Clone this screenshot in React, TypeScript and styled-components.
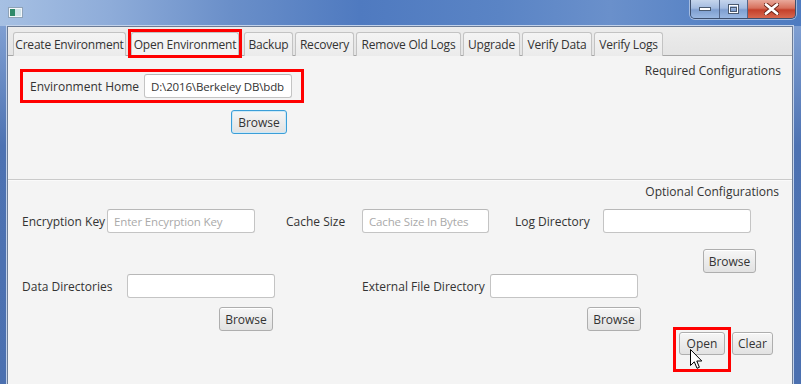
import styled, { createGlobalStyle } from "styled-components";

const GlobalStyle = createGlobalStyle`
  html, body {
    margin: 0;
    padding: 0;
  }
  body {
    width: 801px;
    height: 384px;
    overflow: hidden;
    font-family: "Open Sans", "Noto Sans", sans-serif;
    font-size: 12px;
    color: #333;
  }
`;

const tabs = [
  { title: "Create Environment", width: 113 },
  { title: "Open Environment", width: 108, active: true },
  { title: "Backup", width: 49 },
  { title: "Recovery", width: 59 },
  { title: "Remove Old Logs", width: 105 },
  { title: "Upgrade", width: 57 },
  { title: "Verify Data", width: 70 },
  { title: "Verify Logs", width: 69 },
];

export default function App() {
  return (
    <>
      <GlobalStyle />
      <Window>
        <TitleBar>
          <AppIcon width="15" height="11" viewBox="0 0 15 11">
            <rect x="0.5" y="0.5" width="14" height="10" fill="#f4f7fa" stroke="#8fa3b8" />
            <rect x="2" y="2" width="5" height="7" fill="#2f8a6a" />
            <rect x="7" y="2" width="6" height="7" fill="#cfe3e8" />
          </AppIcon>
          <Controls>
            <CtrlButton $w={28}>
              <svg width="12" height="6" viewBox="0 0 12 6">
                <rect x="0.5" y="1.5" width="11" height="3" fill="#fff" stroke="#4a5a70" />
              </svg>
            </CtrlButton>
            <CtrlButton $w={27}>
              <svg width="11" height="10" viewBox="0 0 11 10">
                <rect x="0.5" y="0.5" width="10" height="9" fill="none" stroke="#4a5a70" />
                <rect x="1.5" y="1.5" width="8" height="7" fill="none" stroke="#fff" />
                <rect x="2.5" y="3.5" width="6" height="4" fill="none" stroke="#4a5a70" />
              </svg>
            </CtrlButton>
            <CloseButton>
              <svg width="15" height="12" viewBox="0 0 15 12">
                <path d="M2 1.5 L13 10.5 M13 1.5 L2 10.5" stroke="#6e2619" strokeWidth="4.6" strokeLinecap="round" />
                <path d="M2 1.5 L13 10.5 M13 1.5 L2 10.5" stroke="#fff" strokeWidth="2.8" strokeLinecap="round" />
              </svg>
            </CloseButton>
          </Controls>
        </TitleBar>
        <Body>
          <Client>
            <TabHeader>
              {tabs.map((t) =>
                t.active ? (
                  <ActiveMark key={t.title}>
                    <Tab $w={t.width} $active>
                      {t.title}
                    </Tab>
                  </ActiveMark>
                ) : (
                  <Tab key={t.title} $w={t.width}>
                    {t.title}
                  </Tab>
                )
              )}
            </TabHeader>

            <RequiredSection>
              <HomeMark>
                <Label $w={114}>Environment Home</Label>
                <Field $w={148} defaultValue={"D:\\2016\\Berkeley DB\\bdb"} readOnly />
              </HomeMark>
              <SectionTitle>Required Configurations</SectionTitle>
              <ButtonRow $left={211}>
                <Button $w={56} $focused>Browse</Button>
              </ButtonRow>
            </RequiredSection>

            <OptionalSection>
              <SectionHeading>Optional Configurations</SectionHeading>
              <FieldRow $top={9}>
                <Label $w={85}>Encryption Key</Label>
                <Field $w={148} placeholder="Enter Encyrption Key" />
                <Label $w={76} $gap={31}>Cache Size</Label>
                <Field $w={127} placeholder="Cache Size In Bytes" />
                <Label $w={88} $gap={26}>Log Directory</Label>
                <Field $w={148} />
              </FieldRow>
              <ButtonRow $left={681} $top={16}>
                <Button $w={53}>Browse</Button>
              </ButtonRow>
              <FieldRow $top={1}>
                <Label $w={105}>Data Directories</Label>
                <Field $w={148} />
                <Label $w={128} $gap={87}>External File Directory</Label>
                <Field $w={148} />
              </FieldRow>
              <ButtonRow $left={197} $top={9}>
                <Button $w={54}>Browse</Button>
                <Button $w={54} $gap={314}>Browse</Button>
              </ButtonRow>
              <ButtonRow $left={657} $top={1}>
                <MarkWrap>
                  <Button $w={46} $h={23}>Open</Button>
                  <OpenMark />
                  <Cursor width="13" height="21" viewBox="0 0 13 21">
                    <path
                      d="M0.5 0.5 L0.5 16.5 L4.3 12.8 L7 19.3 L9.4 18.3 L6.8 12 L11.8 12 Z"
                      fill="#fff"
                      stroke="#000"
                      strokeLinejoin="round"
                    />
                  </Cursor>
                </MarkWrap>
                <Button $w={41} $h={23} $gap={7}>Clear</Button>
              </ButtonRow>
            </OptionalSection>
          </Client>
        </Body>
      </Window>
    </>
  );
}

const Window = styled.div`
  width: 801px;
  height: 384px;
  display: flex;
  flex-direction: column;
  background: linear-gradient(
    to right,
    #a6c0e3 0px,
    #8eacd9 110px,
    #6a8fc9 230px,
    #4f7ac0 360px,
    #5a84c5 500px,
    #6a90cb 610px,
    #5581c4 720px,
    #4e7bc0 801px
  );
`;

const TitleBar = styled.div`
  height: 26px;
  display: flex;
  justify-content: space-between;
  align-items: flex-start;
  padding: 0 5px 0 8px;
`;

const AppIcon = styled.svg`
  margin-top: 7px;
`;

const Controls = styled.div`
  display: flex;
  height: 18px;
  border: 1px solid #3d4f6e;
  border-top: none;
  border-radius: 0 0 5px 5px;
  overflow: hidden;
  box-shadow: 0 0 0 1px rgba(255, 255, 255, 0.45);
`;

const CtrlButton = styled.div<{ $w: number }>`
  width: ${(p) => p.$w}px;
  display: flex;
  align-items: center;
  justify-content: center;
  border-right: 1px solid #53668a;
  background: linear-gradient(#c5d5ec, #a3bbe0 45%, #7f9fd0 55%, #9ab8e2);
`;

const CloseButton = styled.div`
  width: 47px;
  display: flex;
  align-items: center;
  justify-content: center;
  background: linear-gradient(#e9a99b, #d7705c 45%, #c4402b 55%, #d7684f);
`;

const Body = styled.div`
  flex: 1;
  display: flex;
  padding: 0 8px 0 7px;
  background: linear-gradient(#7f9fd2, #4d72b2 120px, #4b70b0);
`;

const Client = styled.div`
  flex: 1;
  display: flex;
  flex-direction: column;
  background: #f4f4f4;
  border: 1px solid #6c7c96;
  border-bottom: none;
  box-shadow: 0 0 0 1px #c2d2ea;
`;

const TabHeader = styled.div`
  height: 29px;
  display: flex;
  align-items: flex-end;
  gap: 2px;
  padding-left: 5px;
  background: linear-gradient(#ececec, #e4e4e4);
  box-shadow: inset 0 -1px 0 #a7a7a7;
`;

const Tab = styled.div<{ $w: number; $active?: boolean }>`
  width: ${(p) => p.$w}px;
  height: 24px;
  box-sizing: border-box;
  display: flex;
  align-items: center;
  justify-content: center;
  border: 1px solid #c3c3c3;
  border-bottom: none;
  border-radius: 3px 3px 0 0;
  background: ${(p) => (p.$active ? "#f4f4f4" : "linear-gradient(#f4f4f4, #ebebeb)")};
  white-space: nowrap;
  letter-spacing: -0.2px;
`;

const ActiveMark = styled.div`
  display: flex;
  align-items: flex-end;
  justify-content: center;
  height: 27px;
  width: 114px;
  box-sizing: border-box;
  border: 3px solid #f00;
  border-bottom: none;
  position: relative;
  z-index: 1;
  &::after {
    content: "";
    position: absolute;
    left: -3px;
    right: -3px;
    bottom: -2px;
    height: 3px;
    background: #f00;
  }
`;

const RequiredSection = styled.div`
  height: 124px;
  box-sizing: border-box;
  display: grid;
  grid-template-columns: auto 1fr;
  grid-template-rows: auto auto;
  align-content: start;
  padding: 13px 11px 0 12px;
  border-bottom: 1px solid #cacaca;
`;

const SectionTitle = styled.div`
  justify-self: end;
  align-self: start;
  margin-top: -7px;
  white-space: nowrap;
`;

const HomeMark = styled.div`
  width: 284px;
  height: 34px;
  box-sizing: border-box;
  border: 3px solid #f00;
  display: flex;
  align-items: center;
  padding: 0 9px 0 7px;
`;

const OptionalSection = styled.div`
  flex: 1;
  display: flex;
  flex-direction: column;
  padding: 3px 13px 0 14px;
  border-top: 1px solid #fafafa;
`;

const SectionHeading = styled.div`
  align-self: flex-end;
  line-height: 16px;
  white-space: nowrap;
`;

const FieldRow = styled.div<{ $top: number }>`
  display: flex;
  align-items: center;
  height: 24px;
  margin-top: ${(p) => p.$top}px;
`;

const ButtonRow = styled.div<{ $left: number; $top?: number }>`
  display: flex;
  grid-column: 1 / span 2;
  margin-top: ${(p) => p.$top ?? 7}px;
  padding-left: ${(p) => p.$left}px;
`;

const Label = styled.span<{ $w: number; $gap?: number }>`
  width: ${(p) => p.$w}px;
  margin-left: ${(p) => p.$gap ?? 0}px;
  flex-shrink: 0;
  white-space: nowrap;
`;

const Field = styled.input<{ $w: number }>`
  width: ${(p) => p.$w}px;
  height: 24px;
  box-sizing: border-box;
  flex-shrink: 0;
  border: 1px solid #c4c4c4;
  border-top-color: #b8b8b8;
  border-radius: 3px;
  background: #fff;
  padding: 0 5px 0 6px;
  font-family: inherit;
  font-size: 11.5px;
  letter-spacing: -0.15px;
  color: #333;
  outline: none;
  &::placeholder {
    color: #aaa;
  }
`;

const Button = styled.div<{ $w: number; $h?: number; $gap?: number; $focused?: boolean }>`
  width: ${(p) => p.$w}px;
  height: ${(p) => p.$h ?? 24}px;
  margin-left: ${(p) => p.$gap ?? 0}px;
  box-sizing: border-box;
  display: flex;
  align-items: center;
  justify-content: center;
  border: 1px solid ${(p) => (p.$focused ? "#3a9ed8" : "#aeaeae")};
  border-radius: 3px;
  background: linear-gradient(#f6f6f6, #e2e2e2);
  box-shadow: ${(p) => (p.$focused ? "inset 0 0 0 1px #cde9f7" : "inset 0 1px 0 #fff")};
  flex-shrink: 0;
`;

const MarkWrap = styled.div`
  position: relative;
`;

const OpenMark = styled.div`
  position: absolute;
  left: -6px;
  top: -5px;
  width: 58px;
  height: 45px;
  box-sizing: border-box;
  border: 3px solid #f00;
`;

const Cursor = styled.svg`
  position: absolute;
  left: 11px;
  top: 17px;
`;
